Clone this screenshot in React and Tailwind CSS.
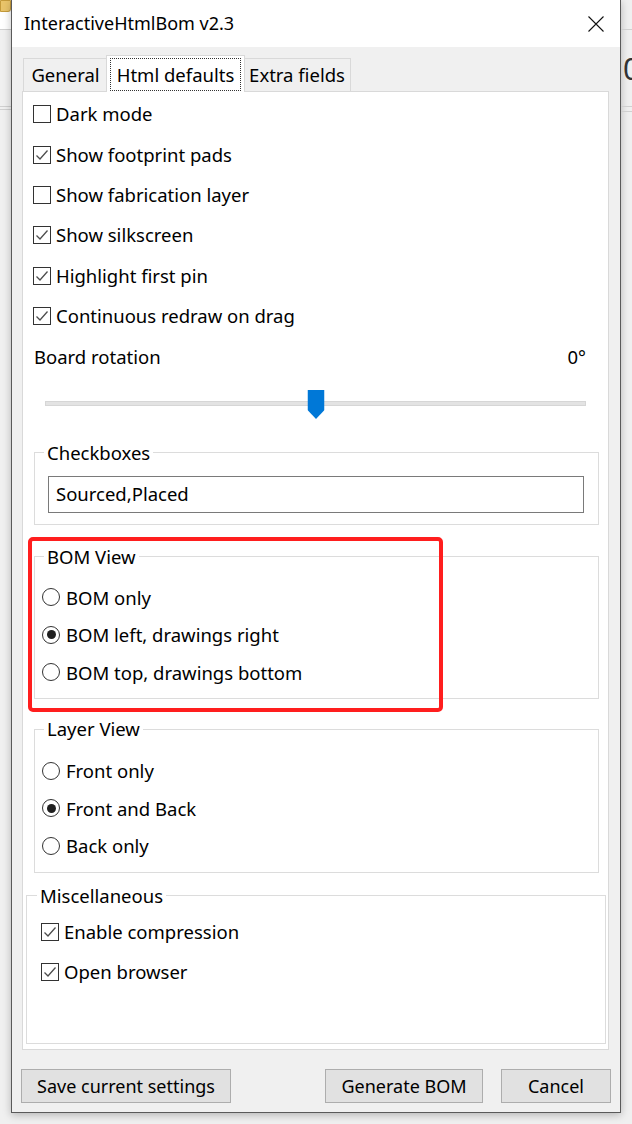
import React from "react";

const font = { fontFamily: '"Noto Sans", "Open Sans", sans-serif' };

function Check({ checked }) {
  return (
    <span className="w-[18px] h-[18px] border border-[#333333] bg-white flex items-center justify-center shrink-0">
      {checked && (
        <svg width="14" height="14" viewBox="0 0 14 14">
          <path d="M1.5 7.5 L5 11 L12.5 2.5" fill="none" stroke="#4d4d4d" strokeWidth="1.3" />
        </svg>
      )}
    </span>
  );
}

function Radio({ checked }) {
  return (
    <span className="w-[18px] h-[18px] rounded-full border border-[#333333] bg-white flex items-center justify-center shrink-0">
      {checked && <span className="w-[9px] h-[9px] rounded-full bg-[#1f1f1f]" />}
    </span>
  );
}

function CheckRow({ label, checked }) {
  return (
    <div className="h-[40.4px] flex items-center gap-[5px] pl-[10px]">
      <Check checked={checked} />
      <span>{label}</span>
    </div>
  );
}

function RadioRow({ label, checked }) {
  return (
    <div className="h-[37.5px] flex items-center gap-[6px]">
      <Radio checked={checked} />
      <span>{label}</span>
    </div>
  );
}

function Group({ title, className, children }) {
  return (
    <fieldset className={"border border-[#dcdcdc] pl-[7px] " + className}>
      <legend className="ml-[2px] px-[3px] leading-[24px]">{title}</legend>
      {children}
    </fieldset>
  );
}

function Button({ children, className }) {
  return (
    <button className={"h-[34px] border border-[#adadad] bg-[#e1e1e1] flex items-center justify-center " + className}>
      {children}
    </button>
  );
}

export default function App() {
  return (
    <div className="w-[632px] h-[1124px] bg-[#f0f0f0] flex overflow-hidden text-[18.5px] text-black" style={font}>
      {/* background window peeking out on the left */}
      <div className="w-[11px] flex flex-col">
        <div className="h-[12px] bg-[#e9c46a] border border-[#c49a3a] rounded-br-[3px]" />
        <div className="h-[18px] bg-white border-b border-[#d0d0d0]" />
        <div className="h-[77px] border-b border-[#d0d0d0]" />
        <div className="h-[3px] border-b border-[#d0d0d0]" />
      </div>

      {/* dialog */}
      <div className="w-[610px] h-[1113px] border-x border-b border-[#5a5a5a] flex flex-col shadow-[0_2px_8px_rgba(0,0,0,0.25)]">
        <div className="h-[47px] bg-white flex items-center justify-between pl-[12px] pr-[16px] shrink-0">
          <span className="text-[18px]">InteractiveHtmlBom v2.3</span>
          <svg width="16" height="16" viewBox="0 0 16 16">
            <path d="M0.5 0.5 L15.5 15.5 M15.5 0.5 L0.5 15.5" stroke="#111" strokeWidth="1.1" />
          </svg>
        </div>

        <div className="flex-1 flex flex-col pt-[8px] pl-[10px] pr-[11px]">
          {/* tabs */}
          <div className="h-[36px] flex items-end">
            <div className="ml-[1px] w-[85px] h-[33px] border-x border-t border-[#d9d9d9] bg-[#f0f0f0] flex items-center justify-center">
              General
            </div>
            <div className="-mx-[2px] w-[139px] h-[37px] -mb-[1px] relative z-10 border-x border-t border-[#d9d9d9] bg-white pt-[2px] pb-[1px] px-[3px]">
              <div className="h-full border border-dotted border-[#333] flex items-center justify-center">Html defaults</div>
            </div>
            <div className="w-[108px] h-[33px] border-x border-t border-[#d9d9d9] bg-[#f0f0f0] flex items-center justify-center">
              Extra fields
            </div>
          </div>

          {/* tab panel */}
          <div className="h-[959px] bg-white border border-[#d9d9d9] flex flex-col pt-[2px]">
            <CheckRow label="Dark mode" />
            <CheckRow label="Show footprint pads" checked />
            <CheckRow label="Show fabrication layer" />
            <CheckRow label="Show silkscreen" checked />
            <CheckRow label="Highlight first pin" checked />
            <CheckRow label="Continuous redraw on drag" checked />
            <div className="h-[40.4px] flex items-center justify-between pl-[11px] pr-[22px]">
              <span>Board rotation</span>
              <span>0°</span>
            </div>
            <div className="h-[54px] mx-[22px] relative flex items-center">
              <div className="w-full h-[5px] bg-[#e3e3e3] border border-[#d6d6d6]" />
              <svg className="absolute left-1/2 -translate-x-1/2 top-[13px]" width="17" height="29" viewBox="0 0 17 29">
                <path d="M0 0 H17 V20 L8.5 29 L0 20 Z" fill="#0078d7" />
              </svg>
            </div>

            <Group title="Checkboxes" className="mt-[10px] ml-[11px] mr-[9px] pr-[14px] pb-[11px]">
              <div className="mt-[11px] ml-[6px] h-[37px] border border-[#7a7a7a] flex items-center pl-[7px]">
                Sourced,Placed
              </div>
            </Group>

            <Group title="BOM View" className="mt-[20px] ml-[11px] mr-[9px] pt-[10px] pb-[7px]">
              <RadioRow label="BOM only" />
              <RadioRow label="BOM left, drawings right" checked />
              <RadioRow label="BOM top, drawings bottom" />
            </Group>

            <Group title="Layer View" className="mt-[18px] ml-[11px] mr-[9px] pt-[11px] pb-[7px]">
              <RadioRow label="Front only" />
              <RadioRow label="Front and Back" checked />
              <RadioRow label="Back only" />
            </Group>

            <fieldset className="mt-[11px] ml-[3px] mr-[2px] mb-[5px] flex-1 border border-[#dcdcdc] pl-[4px] pt-[4px]">
              <legend className="ml-[6px] px-[3px] leading-[24px]">Miscellaneous</legend>
              <CheckRow label="Enable compression" checked />
              <CheckRow label="Open browser" checked />
            </fieldset>
          </div>

          {/* buttons */}
          <div className="mt-[19px] flex -ml-[1px] -mr-[2px] text-[18px]">
            <Button className="w-[210px]">Save current settings</Button>
            <div className="flex-1" />
            <Button className="w-[158px]">Generate BOM</Button>
            <Button className="w-[110px] ml-[18px]">Cancel</Button>
          </div>
        </div>
      </div>

      {/* background window peeking out on the right */}
      <div className="flex-1 flex flex-col overflow-hidden">
        <div className="h-[30px] border-b border-[#d0d0d0]" />
        <div className="h-[77px] border-b border-[#d0d0d0] flex items-center pl-[2px] text-[30px] text-[#333]">0</div>
        <div className="h-[5px] border-b border-[#d0d0d0]" />
      </div>

      {/* red highlight around BOM View */}
      <div className="absolute left-[28px] top-[537px] w-[415px] h-[175px] border-[4px] border-[#ff1e1e] rounded-[5px]" />
    </div>
  );
}
